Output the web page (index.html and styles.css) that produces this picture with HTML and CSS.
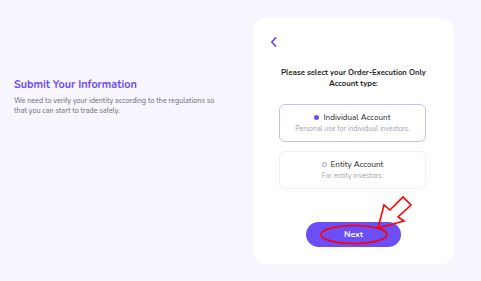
FILE: index.html
```html
<!DOCTYPE html>
<html>
<head>
<meta charset="utf-8">
<link rel="stylesheet" href="styles.css">
</head>
<body>
<div class="page">
  <section class="intro">
    <h1 class="intro-title">Submit Your Information</h1>
    <p class="intro-text">We need to verify your identity according to the regulations so that you can start to trade safely.</p>
  </section>
  <section class="card">
    <div class="back">
      <svg width="7" height="10" viewBox="0 0 7 10"><path d="M5.5 1 L1.8 5 L5.5 9" fill="none" stroke="#6b4ef6" stroke-width="1.8" stroke-linecap="round" stroke-linejoin="round"/></svg>
    </div>
    <h2 class="card-title">Please select your Order-Execution Only<br>Account type:</h2>
    <div class="options">
      <div class="option option-selected">
        <div class="option-name"><span class="dot dot-on"></span>Individual Account</div>
        <div class="option-desc">Personal use for individual investors.</div>
      </div>
      <div class="option">
        <div class="option-name"><span class="dot dot-off"></span>Entity Account</div>
        <div class="option-desc">For entity investors.</div>
      </div>
    </div>
    <div class="actions">
      <button class="next">Next</button>
    </div>
  </section>
</div>
<svg class="annotation" width="481" height="281" viewBox="0 0 481 281">
  <ellipse cx="354" cy="234.5" rx="33" ry="9" fill="none" stroke="#ff0000" stroke-width="1.6"/>
  <polygon points="378,228 384,205 390,210 403,197 411,205 398,217 404,221" fill="none" stroke="#ff0000" stroke-width="1.6" stroke-linejoin="miter"/>
</svg>
</body>
</html>
```
FILE: styles.css
```css
html, body {
  margin: 0;
  padding: 0;
}
body {
  background: #f7f5fe;
  font-family: "Nunito", "Lato", "Noto Sans", sans-serif;
  width: 481px;
  height: 281px;
  overflow: hidden;
  position: relative;
}
.page {
  display: flex;
  align-items: flex-start;
}
.intro {
  width: 239px;
  padding-left: 14px;
  padding-top: 78px;
}
.intro-title {
  margin: 0;
  font-size: 10.8px;
  line-height: 14px;
  font-weight: 700;
  color: #6b4ef6;
}
.intro-text {
  margin: 5px 0 0;
  width: 212px;
  font-size: 7.2px;
  line-height: 9.5px;
  color: #6e6e78;
}
.card {
  margin-top: 18px;
  width: 201px;
  height: 246px;
  background: #ffffff;
  border-radius: 13px;
  box-sizing: border-box;
  padding-top: 19px;
  display: flex;
  flex-direction: column;
}
.back {
  padding-left: 17px;
  height: 10px;
  line-height: 0;
}
.card-title {
  margin: 19.5px 0 0;
  text-align: center;
  font-size: 7.7px;
  line-height: 11px;
  font-weight: 700;
  color: #1f1f24;
}
.options {
  margin: 15px auto 0;
  width: 147px;
  display: flex;
  flex-direction: column;
  gap: 9px;
  transform: translateX(-1px);
}
.option {
  height: 38px;
  box-sizing: border-box;
  border: 1px solid #f0eef6;
  border-radius: 6px;
  display: flex;
  flex-direction: column;
  align-items: center;
  justify-content: center;
  gap: 1px;
}
.option-selected {
  border-color: #c7bcfb;
}
.option-name {
  display: flex;
  align-items: center;
  font-size: 8.1px;
  line-height: 10px;
  color: #26262c;
}
.dot {
  width: 5px;
  height: 5px;
  border-radius: 50%;
  margin-right: 4px;
  box-sizing: border-box;
}
.dot-on {
  background: #6b4ef6;
}
.dot-off {
  border: 1px solid #a898f8;
}
.option-desc {
  font-size: 7px;
  line-height: 9px;
  color: #a3a3aa;
}
.actions {
  display: flex;
  justify-content: center;
  margin-top: 33px;
}
.next {
  width: 95px;
  height: 25px;
  border: none;
  border-radius: 13px;
  background: #6b4ef6;
  color: #ffffff;
  font-family: inherit;
  font-size: 8.5px;
  font-weight: 700;
  padding: 0;
}
.annotation {
  position: absolute;
  left: 0;
  top: 0;
  pointer-events: none;
}
```
